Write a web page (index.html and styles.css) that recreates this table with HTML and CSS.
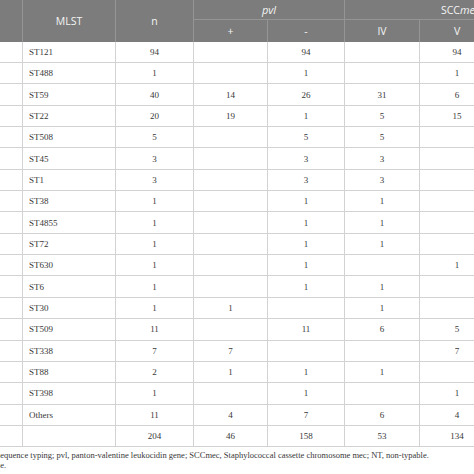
FILE: index.html
```html
<!DOCTYPE html>
<html>
<head>
<meta charset="utf-8">
<link rel="stylesheet" href="styles.css">
</head>
<body>
<div class="page">
<table class="data">
  <colgroup>
    <col class="c0"><col class="cm"><col class="cn"><col class="cp"><col class="cq"><col class="civ"><col class="cv"><col class="cnt">
  </colgroup>
  <thead>
    <tr class="h1">
      <th rowspan="2"></th>
      <th rowspan="2">MLST</th>
      <th rowspan="2">n</th>
      <th colspan="2"><i>pvl</i></th>
      <th colspan="3" class="scc">SCC<i>mec</i></th>
    </tr>
    <tr class="h2">
      <th>+</th>
      <th>-</th>
      <th>IV</th>
      <th>V</th>
      <th>NT</th>
    </tr>
  </thead>
  <tbody>
    <tr><td></td><td class="st">ST121</td><td>94</td><td></td><td>94</td><td></td><td>94</td><td></td></tr>
    <tr><td></td><td class="st">ST488</td><td>1</td><td></td><td>1</td><td></td><td>1</td><td></td></tr>
    <tr><td></td><td class="st">ST59</td><td>40</td><td>14</td><td>26</td><td>31</td><td>6</td><td></td></tr>
    <tr><td></td><td class="st">ST22</td><td>20</td><td>19</td><td>1</td><td>5</td><td>15</td><td></td></tr>
    <tr><td></td><td class="st">ST508</td><td>5</td><td></td><td>5</td><td>5</td><td></td><td></td></tr>
    <tr><td></td><td class="st">ST45</td><td>3</td><td></td><td>3</td><td>3</td><td></td><td></td></tr>
    <tr><td></td><td class="st">ST1</td><td>3</td><td></td><td>3</td><td>3</td><td></td><td></td></tr>
    <tr><td></td><td class="st">ST38</td><td>1</td><td></td><td>1</td><td>1</td><td></td><td></td></tr>
    <tr><td></td><td class="st">ST4855</td><td>1</td><td></td><td>1</td><td>1</td><td></td><td></td></tr>
    <tr><td></td><td class="st">ST72</td><td>1</td><td></td><td>1</td><td>1</td><td></td><td></td></tr>
    <tr><td></td><td class="st">ST630</td><td>1</td><td></td><td>1</td><td></td><td>1</td><td></td></tr>
    <tr><td></td><td class="st">ST6</td><td>1</td><td></td><td>1</td><td>1</td><td></td><td></td></tr>
    <tr><td></td><td class="st">ST30</td><td>1</td><td>1</td><td></td><td>1</td><td></td><td></td></tr>
    <tr><td></td><td class="st">ST509</td><td>11</td><td></td><td>11</td><td>6</td><td>5</td><td></td></tr>
    <tr><td></td><td class="st">ST338</td><td>7</td><td>7</td><td></td><td></td><td>7</td><td></td></tr>
    <tr><td></td><td class="st">ST88</td><td>2</td><td>1</td><td>1</td><td>1</td><td></td><td></td></tr>
    <tr><td></td><td class="st">ST398</td><td>1</td><td></td><td>1</td><td></td><td>1</td><td></td></tr>
    <tr><td></td><td class="st">Others</td><td>11</td><td>4</td><td>7</td><td>6</td><td>4</td><td></td></tr>
    <tr><td></td><td class="st"></td><td>204</td><td>46</td><td>158</td><td>53</td><td>134</td><td></td></tr>
  </tbody>
</table>
<div class="note">
  <p>sequence typing; pvl, panton-valentine leukocidin gene; SCCmec, Staphylococcal cassette chromosome mec; NT, non-typable.</p>
  <p>se.</p>
</div>
</div>
</body>
</html>
```

FILE: styles.css
```css
html, body {
  margin: 0;
  padding: 0;
  background: #ffffff;
  overflow: hidden;
}

.page {
  width: 474px;
  height: 474px;
  overflow: hidden;
}

.data {
  border-collapse: separate;
  border-spacing: 0;
  table-layout: fixed;
  width: 577px;
  font-family: "Liberation Serif", "Times New Roman", serif;
  font-size: 9px;
  color: #383838;
}

.c0 { width: 23px; }
.cm { width: 93px; }
.cn { width: 78px; }
.cp { width: 74px; }
.cq { width: 77px; }
.civ { width: 75px; }
.cv { width: 75px; }
.cnt { width: 82px; }

.data th {
  background: #7c7c7c;
  color: #f4f4f4;
  font-family: "Open Sans", "Noto Sans", sans-serif;
  font-weight: normal;
  font-size: 10.5px;
  padding: 0;
  text-align: center;
  border-right: 1px solid #959595;
}

.h1 { height: 20px; }
.h1 th[colspan] { border-bottom: 1px solid #959595; }
.h1 th i { font-size: 11px; }
.h2 { height: 21.7px; }

.scc { text-align: center; }

.data td {
  padding: 0;
  text-align: center;
  border-right: 1px solid #d2d2d2;
  border-bottom: 1px solid #d2d2d2;
}

.data tbody tr { height: 21.35px; }

.data td.st {
  text-align: left;
  padding-left: 6px;
}

.note {
  font-family: "Liberation Serif", "Times New Roman", serif;
  font-size: 8.5px;
  line-height: 10px;
  color: #383838;
  margin-left: -3px;
  padding-top: 3px;
  white-space: nowrap;
}

.note p {
  margin: 0;
}
```
